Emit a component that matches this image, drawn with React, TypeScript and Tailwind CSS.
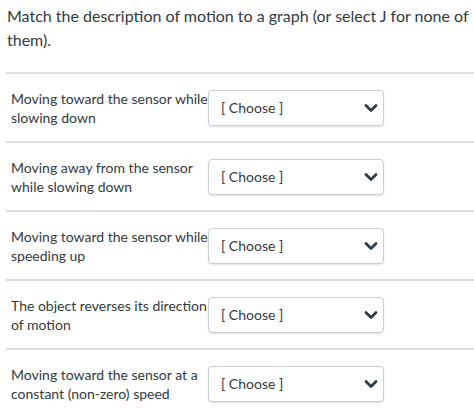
const rows = [
  'Moving toward the sensor while slowing down',
  'Moving away from the sensor while slowing down',
  'Moving toward the sensor while speeding up',
  'The object reverses its direction of motion',
  'Moving toward the sensor at a constant (non-zero) speed',
]

function Chevron() {
  return (
    <svg width="14" height="10" viewBox="0 0 14 10" className="shrink-0">
      <path d="M2 2.5 L7 7.5 L12 2.5" fill="none" stroke="#2d3b45" strokeWidth="2.8" strokeLinecap="round" strokeLinejoin="round" />
    </svg>
  )
}

export default function App() {
  return (
    <div className="w-[474px] h-[412px] bg-white overflow-hidden text-[#333a40]" style={{ fontFamily: 'Lato, "Open Sans", sans-serif' }}>
      <p className="pl-[7px] pt-[4px] text-[16px] leading-[24px]">
        Match the description of motion to a graph (or select J for none of them).
      </p>
      <div className="mt-[20px] ml-[6px]">
        {rows.map((label, i) => (
          <div key={i} className="border-t-2 border-[#dcdfe1] flex items-center h-[69px]">
            <div className="w-[202px] pl-[5px] text-[14px] leading-[19px]">{label}</div>
            <div className="w-[176px] h-[36px] border border-[#c7cdd1] rounded-[4px] shadow-[0_1px_2px_rgba(0,0,0,0.12)] flex items-center justify-between pl-[12px] pr-[5px]">
              <span className="text-[14px]">[ Choose ]</span>
              <Chevron />
            </div>
          </div>
        ))}
      </div>
    </div>
  )
}
